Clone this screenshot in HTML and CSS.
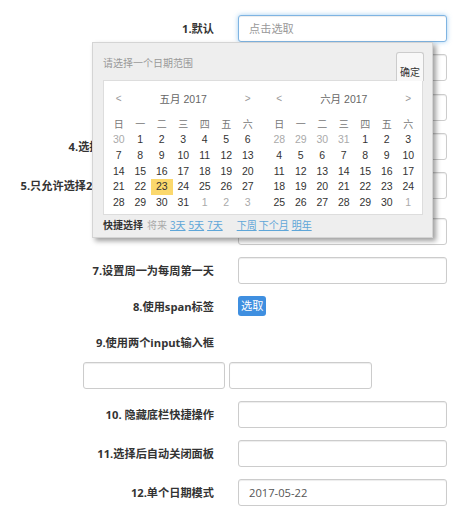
FILE: index.html
```html
<!DOCTYPE html>
<html lang="zh-CN">
<head>
<meta charset="utf-8">
<title>日期范围选择</title>
<link rel="stylesheet" href="styles.css">
</head>
<body>
<div class="page">
  <form class="form">
    <div class="row"><label class="lbl">1.默认</label><div class="field"><input class="input is-focus" placeholder="点击选取"></div></div>
    <div class="row"><label class="lbl">2.自定义分隔符</label><div class="field"><input class="input"></div></div>
    <div class="row"><label class="lbl">3.设置默认值</label><div class="field"><input class="input"></div></div>
    <div class="row"><label class="lbl">4.选择范围限制在3至7天之间</label><div class="field"><input class="input"></div></div>
    <div class="row row-long"><label class="lbl">5.只允许选择2017-05-01到2017-06-30</label><div class="field"><input class="input"></div></div>
    <div class="row"><label class="lbl">6.按周选择</label><div class="field"><input class="input"></div></div>
    <div class="row"><label class="lbl">7.设置周一为每周第一天</label><div class="field"><input class="input"></div></div>
    <div class="row row-span"><label class="lbl">8.使用span标签</label><div class="field"><span class="pick-btn">选取</span></div></div>
    <div class="row row-solo"><label class="lbl">9.使用两个input输入框</label></div>
    <div class="row row-pair"><input class="input input-a"><input class="input input-b"></div>
    <div class="row"><label class="lbl">10. 隐藏底栏快捷操作</label><div class="field"><input class="input"></div></div>
    <div class="row"><label class="lbl">11.选择后自动关闭面板</label><div class="field"><input class="input"></div></div>
    <div class="row"><label class="lbl">12.单个日期模式</label><div class="field"><input class="input" value="2017-05-22"></div></div>
  </form>

  <div class="picker">
    <div class="picker-head">
      <span class="picker-title">请选择一个日期范围</span>
      <span class="ok-btn">确定</span>
    </div>
    <div class="calendar">
      <table class="month">
        <colgroup><col><col><col><col><col><col><col></colgroup>
        <thead>
          <tr class="m-head"><th class="arrow">&lt;</th><th colspan="5" class="m-name">五月 2017</th><th class="arrow">&gt;</th></tr>
          <tr class="dow"><th>日</th><th>一</th><th>二</th><th>三</th><th>四</th><th>五</th><th>六</th></tr>
        </thead>
        <tbody>
          <tr><td class="off">30</td><td>1</td><td>2</td><td>3</td><td>4</td><td>5</td><td>6</td></tr>
          <tr><td>7</td><td>8</td><td>9</td><td>10</td><td>11</td><td>12</td><td>13</td></tr>
          <tr><td>14</td><td>15</td><td>16</td><td>17</td><td>18</td><td>19</td><td>20</td></tr>
          <tr><td>21</td><td>22</td><td class="today">23</td><td>24</td><td>25</td><td>26</td><td>27</td></tr>
          <tr><td>28</td><td>29</td><td>30</td><td>31</td><td class="off">1</td><td class="off">2</td><td class="off">3</td></tr>
        </tbody>
      </table>
      <table class="month">
        <colgroup><col><col><col><col><col><col><col></colgroup>
        <thead>
          <tr class="m-head"><th class="arrow">&lt;</th><th colspan="5" class="m-name">六月 2017</th><th class="arrow">&gt;</th></tr>
          <tr class="dow"><th>日</th><th>一</th><th>二</th><th>三</th><th>四</th><th>五</th><th>六</th></tr>
        </thead>
        <tbody>
          <tr><td class="off">28</td><td class="off">29</td><td class="off">30</td><td class="off">31</td><td>1</td><td>2</td><td>3</td></tr>
          <tr><td>4</td><td>5</td><td>6</td><td>7</td><td>8</td><td>9</td><td>10</td></tr>
          <tr><td>11</td><td>12</td><td>13</td><td>14</td><td>15</td><td>16</td><td>17</td></tr>
          <tr><td>18</td><td>19</td><td>20</td><td>21</td><td>22</td><td>23</td><td>24</td></tr>
          <tr><td>25</td><td>26</td><td>27</td><td>28</td><td>29</td><td>30</td><td class="off">1</td></tr>
        </tbody>
      </table>
    </div>
    <div class="shortcuts">
      <b class="sc-title">快捷选择</b>
      <span class="sc-muted">将来</span>
      <a class="sc-link">3天</a>
      <a class="sc-link">5天</a>
      <a class="sc-link">7天</a>
      <a class="sc-link sc-group">下周</a>
      <a class="sc-link sc-tight">下个月</a>
      <a class="sc-link">明年</a>
    </div>
  </div>
</div>
</body>
</html>
```

FILE: styles.css
```css
* { box-sizing: border-box; }

html, body {
  margin: 0;
  padding: 0;
  background: #fff;
}

body {
  font-family: "Open Sans", "Noto Sans CJK SC", sans-serif;
  color: #333;
}

.page {
  position: relative;
  width: 474px;
  height: 521px;
  overflow: hidden;
}

.form {
  padding-top: 15px;
  margin: 0;
}

.row {
  display: flex;
  align-items: flex-start;
  margin-bottom: 12.3px;
}

.row-long { margin-bottom: 18.8px; }
.row-span { margin-top: -3.3px; }
.row-solo { margin-bottom: 11px; }
.row-pair {
  padding-left: 83px;
  gap: 4px;
}

.lbl {
  flex: none;
  width: 214px;
  text-align: right;
  white-space: nowrap;
  padding-top: 6px;
  line-height: 16px;
  font-size: 11.2px;
  font-weight: 700;
  color: #333;
}

.field {
  margin-left: 24px;
}

.input {
  display: block;
  width: 209px;
  height: 27px;
  margin: 0;
  padding: 0 10px;
  border: 1px solid #ccc;
  border-radius: 3px;
  background: #fff;
  box-shadow: inset 0 1px 1px rgba(0, 0, 0, .075);
  font-family: "Open Sans", "Noto Sans CJK SC", sans-serif;
  font-size: 11.2px;
  color: #555;
  outline: none;
}

.input::placeholder { color: #999; }

.is-focus {
  border-color: #7fb4e2;
  box-shadow: inset 0 1px 1px rgba(0, 0, 0, .075), 0 0 5px rgba(102, 175, 233, .6);
}

.input-a { width: 142px; }
.input-b { width: 143px; }

.pick-btn {
  display: inline-block;
  height: 20px;
  line-height: 20px;
  padding: 0 3px;
  border-radius: 3px;
  background: #3f8fe0;
  color: #fff;
  font-size: 11.2px;
}

/* ---------- date range picker popup ---------- */
.picker {
  position: absolute;
  left: 92px;
  top: 42px;
  width: 341px;
  height: 196px;
  background: #eee;
  border: 1px solid #d4d4d4;
  box-shadow: 3px 3px 5px rgba(0, 0, 0, .38);
  font-family: "Liberation Sans", "Noto Sans CJK SC", sans-serif;
}

.picker-head {
  display: flex;
  justify-content: space-between;
  align-items: flex-start;
  height: 37px;
  padding: 9px 8px 0 10px;
}

.picker-title {
  margin-top: 4px;
  line-height: 14px;
  font-size: 10px;
  color: #999;
  font-family: "Noto Sans CJK SC", sans-serif;
}

.ok-btn {
  display: block;
  width: 28px;
  height: 29px;
  padding-top: 12px;
  line-height: 14px;
  text-align: center;
  font-size: 10px;
  color: #333;
  background: #f8f8f8;
  border: 1px solid #ccc;
  border-bottom: none;
  border-radius: 3px 3px 0 0;
  font-family: "Noto Sans CJK SC", sans-serif;
}

.calendar {
  display: flex;
  align-items: flex-start;
  gap: 10px;
  height: 135px;
  margin: 0 9px 0 10px;
  padding: 7px 3px 0 4px;
  background: #fff;
  border: 1px solid #ddd;
}

.month {
  flex: none;
  width: 150.5px;
  table-layout: fixed;
  border-collapse: collapse;
  border-spacing: 0;
}

.month col { width: 21.5px; }

.month th,
.month td {
  padding: 0;
  text-align: center;
  font-weight: 400;
  white-space: nowrap;
}

.m-head th {
  height: 22px;
  line-height: 22px;
  font-size: 10.5px;
  color: #666;
}

.m-head .arrow {
  color: #999;
  font-size: 10px;
}

.dow th {
  height: 22px;
  padding-top: 6px;
  line-height: 16px;
  font-size: 10px;
  color: #777;
  font-family: "Noto Sans CJK SC", sans-serif;
}

.month td {
  height: 15.75px;
  line-height: 15.75px;
  font-size: 10.5px;
  color: #333;
}

.month td.off { color: #aaa; }

.month td.today {
  background: #fbd86c;
}

.shortcuts {
  display: flex;
  align-items: center;
  margin-top: 3px;
  padding-left: 10px;
  line-height: 14px;
  font-size: 10px;
  font-family: "Noto Sans CJK SC", sans-serif;
  white-space: nowrap;
}

.sc-title {
  font-weight: 700;
  color: #333;
}

.sc-muted {
  margin-left: 4px;
  color: #aaa;
}

.sc-link {
  margin-left: 3px;
  color: #5ea6d8;
  text-decoration: underline;
}

.sc-group { margin-left: 14px; }
.sc-tight { margin-left: 2px; }
```
